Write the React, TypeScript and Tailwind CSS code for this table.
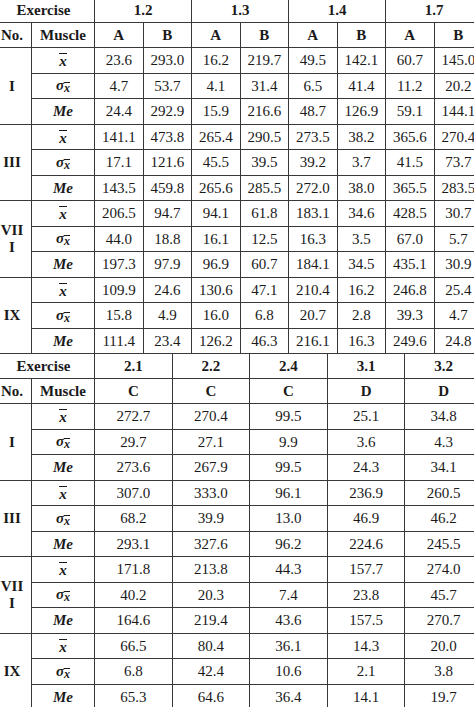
import React from "react";

type Group = { no: React.ReactNode; rows: string[][] };

const cell = "flex items-center justify-center border-r border-b border-[#383838] text-center";

function XBar() {
  return (
    <span className="inline-block border-t-[1.5px] border-current leading-[0.8] pt-[1px]">x</span>
  );
}

function Sigma() {
  return (
    <span>
      σ
      <span className="inline-block align-[-2px] text-[12px]">
        <XBar />
      </span>
    </span>
  );
}

const stats = [<XBar key="x" />, <Sigma key="s" />, <span key="m">Me</span>];

const vii = (
  <span className="leading-[17px]">
    VII
    <br />I
  </span>
);

const groupsTop: Group[] = [
  {
    no: "I",
    rows: [
      ["23.6", "293.0", "16.2", "219.7", "49.5", "142.1", "60.7", "145.0"],
      ["4.7", "53.7", "4.1", "31.4", "6.5", "41.4", "11.2", "20.2"],
      ["24.4", "292.9", "15.9", "216.6", "48.7", "126.9", "59.1", "144.1"],
    ],
  },
  {
    no: "III",
    rows: [
      ["141.1", "473.8", "265.4", "290.5", "273.5", "38.2", "365.6", "270.4"],
      ["17.1", "121.6", "45.5", "39.5", "39.2", "3.7", "41.5", "73.7"],
      ["143.5", "459.8", "265.6", "285.5", "272.0", "38.0", "365.5", "283.5"],
    ],
  },
  {
    no: vii,
    rows: [
      ["206.5", "94.7", "94.1", "61.8", "183.1", "34.6", "428.5", "30.7"],
      ["44.0", "18.8", "16.1", "12.5", "16.3", "3.5", "67.0", "5.7"],
      ["197.3", "97.9", "96.9", "60.7", "184.1", "34.5", "435.1", "30.9"],
    ],
  },
  {
    no: "IX",
    rows: [
      ["109.9", "24.6", "130.6", "47.1", "210.4", "16.2", "246.8", "25.4"],
      ["15.8", "4.9", "16.0", "6.8", "20.7", "2.8", "39.3", "4.7"],
      ["111.4", "23.4", "126.2", "46.3", "216.1", "16.3", "249.6", "24.8"],
    ],
  },
];

const groupsBottom: Group[] = [
  {
    no: "I",
    rows: [
      ["272.7", "270.4", "99.5", "25.1", "34.8"],
      ["29.7", "27.1", "9.9", "3.6", "4.3"],
      ["273.6", "267.9", "99.5", "24.3", "34.1"],
    ],
  },
  {
    no: "III",
    rows: [
      ["307.0", "333.0", "96.1", "236.9", "260.5"],
      ["68.2", "39.9", "13.0", "46.9", "46.2"],
      ["293.1", "327.6", "96.2", "224.6", "245.5"],
    ],
  },
  {
    no: vii,
    rows: [
      ["171.8", "213.8", "44.3", "157.7", "274.0"],
      ["40.2", "20.3", "7.4", "23.8", "45.7"],
      ["164.6", "219.4", "43.6", "157.5", "270.7"],
    ],
  },
  {
    no: "IX",
    rows: [
      ["66.5", "80.4", "36.1", "14.3", "20.0"],
      ["6.8", "42.4", "10.6", "2.1", "3.8"],
      ["65.3", "64.6", "36.4", "14.1", "19.7"],
    ],
  },
];

function DataRows({ groups }: { groups: Group[] }) {
  return (
    <>
      {groups.map((g, gi) =>
        g.rows.map((vals, ri) => (
          <React.Fragment key={`${gi}-${ri}`}>
            {ri === 0 && <div className={`${cell} row-span-3 font-bold`}>{g.no}</div>}
            <div className={`${cell} font-bold italic`}>{stats[ri]}</div>
            {vals.map((v, vi) => (
              <div key={vi} className={cell}>
                {v}
              </div>
            ))}
          </React.Fragment>
        ))
      )}
    </>
  );
}

export default function App() {
  const top = ["1.2", "1.3", "1.4", "1.7"];
  const bottom = [
    ["2.1", "C"],
    ["2.2", "C"],
    ["2.4", "C"],
    ["3.1", "D"],
    ["3.2", "D"],
  ];
  return (
    <div className="w-[474px] h-[707px] overflow-hidden bg-white text-[#1a1a1a] font-['Liberation_Serif',serif] text-[15px]">
      <div className="-mt-[3px] -ml-[8px] w-[490px]">
        <div className="grid grid-cols-[39px_63px_repeat(8,48.5px)] grid-rows-[25px_25px_repeat(12,25.5px)] border-l border-t border-[#383838]">
          <div className={`${cell} col-span-2 font-bold`}>Exercise</div>
          {top.map((t) => (
            <div key={t} className={`${cell} col-span-2 font-bold`}>
              {t}
            </div>
          ))}
          <div className={`${cell} font-bold`}>No.</div>
          <div className={`${cell} font-bold`}>Muscle</div>
          {top.map((t) => (
            <React.Fragment key={t}>
              <div className={`${cell} font-bold`}>A</div>
              <div className={`${cell} font-bold`}>B</div>
            </React.Fragment>
          ))}
          <DataRows groups={groupsTop} />
        </div>
        <div className="grid grid-cols-[39px_63px_repeat(5,77.6px)] grid-rows-[25px_25px_repeat(12,25.5px)] border-l border-[#383838]">
          <div className={`${cell} col-span-2 font-bold`}>Exercise</div>
          {bottom.map(([t]) => (
            <div key={t} className={`${cell} font-bold`}>
              {t}
            </div>
          ))}
          <div className={`${cell} font-bold`}>No.</div>
          <div className={`${cell} font-bold`}>Muscle</div>
          {bottom.map(([t, l]) => (
            <div key={t} className={`${cell} font-bold`}>
              {l}
            </div>
          ))}
          <DataRows groups={groupsBottom} />
        </div>
      </div>
    </div>
  );
}
